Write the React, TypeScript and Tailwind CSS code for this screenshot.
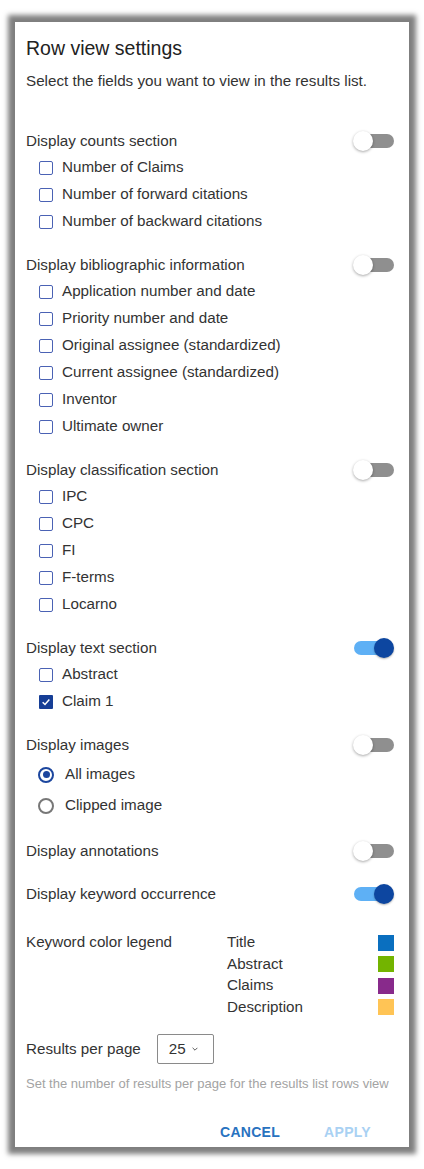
import React from 'react';

type Item = { label: string; checked?: boolean };

const Toggle = ({ on }: { on?: boolean }) => (
  <div className="relative w-[41px] h-5 shrink-0">
    <div
      className={
        on
          ? 'absolute left-[1px] right-[4px] top-[3px] h-[14px] rounded-full bg-[#5eb0f5]'
          : 'absolute left-[4px] right-0 top-[3px] h-[14px] rounded-full bg-[#8f8f8f]'
      }
    />
    <div
      className={
        on
          ? 'absolute right-0 top-0 size-5 rounded-full bg-[#0d46a0] shadow-[0_1px_2px_rgba(0,0,0,0.3)]'
          : 'absolute left-0 top-0 size-5 rounded-full bg-white shadow-[0_1px_3px_rgba(0,0,0,0.35)]'
      }
    />
  </div>
);

const Checkbox = ({ checked }: { checked?: boolean }) =>
  checked ? (
    <div className="size-[14px] rounded-[1px] bg-[#163e96] flex items-center justify-center">
      <svg viewBox="0 0 12 12" className="w-[10px] h-[10px]">
        <path d="M2 6.2 L4.8 9 L10 3" fill="none" stroke="white" strokeWidth="1.8" />
      </svg>
    </div>
  ) : (
    <div className="size-[14px] rounded-[2px] border-[1.5px] border-[#4a62b4]" />
  );

const Radio = ({ checked }: { checked?: boolean }) =>
  checked ? (
    <div className="size-4 rounded-full border-2 border-[#1c469e] flex items-center justify-center">
      <div className="size-[7px] rounded-full bg-[#1c469e]" />
    </div>
  ) : (
    <div className="size-4 rounded-full border-2 border-[#777]" />
  );

const Section = ({ title, on, items }: { title: string; on?: boolean; items: Item[] }) => (
  <div>
    <div className="h-[26px] flex items-center justify-between">
      <span>{title}</span>
      <Toggle on={on} />
    </div>
    {items.map((it) => (
      <div key={it.label} className="h-[27px] flex items-center pl-[13px]">
        <Checkbox checked={it.checked} />
        <span className="ml-[9px]">{it.label}</span>
      </div>
    ))}
  </div>
);

const legend = [
  { label: 'Title', color: 'bg-[#0a6fbf]' },
  { label: 'Abstract', color: 'bg-[#73b400]' },
  { label: 'Claims', color: 'bg-[#882a8b]' },
  { label: 'Description', color: 'bg-[#ffc455]' },
];

export default function App() {
  return (
    <div className="w-[424px] h-[1169px] bg-white pt-[22px] pl-[15px] font-['Liberation_Sans',Arial,sans-serif] text-[15.2px] text-[#333]">
      <div className="w-[394px] h-[1125px] bg-white shadow-[0_0_5px_7px_rgba(0,0,0,0.5)] pl-[11px] pr-[15px] pt-[14px]">
        <h1 className="text-[19.5px] leading-6 text-[#222]">Row view settings</h1>
        <p className="mt-[11px] leading-5">Select the fields you want to view in the results list.</p>

        <div className="mt-[37px] flex flex-col gap-[17px]">
          <Section
            title="Display counts section"
            items={[
              { label: 'Number of Claims' },
              { label: 'Number of forward citations' },
              { label: 'Number of backward citations' },
            ]}
          />
          <Section
            title="Display bibliographic information"
            items={[
              { label: 'Application number and date' },
              { label: 'Priority number and date' },
              { label: 'Original assignee (standardized)' },
              { label: 'Current assignee (standardized)' },
              { label: 'Inventor' },
              { label: 'Ultimate owner' },
            ]}
          />
          <Section
            title="Display classification section"
            items={[{ label: 'IPC' }, { label: 'CPC' }, { label: 'FI' }, { label: 'F-terms' }, { label: 'Locarno' }]}
          />
          <Section
            title="Display text section"
            on
            items={[{ label: 'Abstract' }, { label: 'Claim 1', checked: true }]}
          />
          <div>
            <div className="h-[26px] flex items-center justify-between">
              <span>Display images</span>
              <Toggle />
            </div>
            <div className="mt-[1px] h-[31px] flex items-center pl-[12px]">
              <Radio checked />
              <span className="ml-[11px]">All images</span>
            </div>
            <div className="h-[31px] flex items-center pl-[12px]">
              <Radio />
              <span className="ml-[11px]">Clipped image</span>
            </div>
          </div>
          <div className="h-[26px] flex items-center justify-between">
            <span>Display annotations</span>
            <Toggle />
          </div>
          <div className="h-[26px] flex items-center justify-between">
            <span>Display keyword occurrence</span>
            <Toggle on />
          </div>
        </div>

        <div className="mt-[25px] flex">
          <div className="w-[201px] h-[21.5px] flex items-center">Keyword color legend</div>
          <div className="flex-1">
            {legend.map((l) => (
              <div key={l.label} className="h-[21.5px] flex items-center justify-between">
                <span>{l.label}</span>
                <div className={`size-4 ${l.color}`} />
              </div>
            ))}
          </div>
        </div>

        <div className="mt-[16px] flex items-center">
          <span>Results per page</span>
          <div className="ml-[16px] w-[57px] h-[30px] border border-[#8a8a8a] rounded-[2px] flex items-center pl-[11px]">
            <span>25</span>
            <svg viewBox="0 0 10 6" className="ml-[6px] w-[6px] h-[4px]">
              <path d="M1 1 L5 5 L9 1" fill="none" stroke="#555" strokeWidth="1.6" />
            </svg>
          </div>
        </div>

        <p className="mt-[12px] text-[13px] leading-4 text-[#a3a3a3]">
          Set the number of results per page for the results list rows view
        </p>

        <div className="mt-[22px] flex justify-end pr-[23px] gap-[44px] h-[36px] items-center font-bold text-[14px] tracking-[0.3px]">
          <button className="text-[#2872bf]">CANCEL</button>
          <button className="text-[#a9d1f3]">APPLY</button>
        </div>
      </div>
    </div>
  );
}
